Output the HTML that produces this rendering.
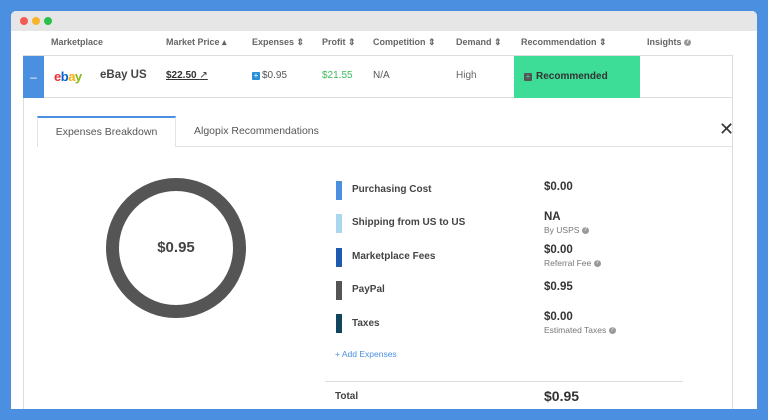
<!DOCTYPE html>
<html style="overflow:hidden;height:420px"><head><style>
body{margin:0;width:768px;height:420px;background:#4a8fe0;font-family:"Liberation Sans",sans-serif;position:relative;overflow:hidden}
.a{position:absolute}
.win{left:11px;top:11px;width:746px;height:398px;background:#fff;border-radius:5px 5px 0 0}
.tb{left:11px;top:11px;width:746px;height:20px;background:#e6e6e6;border-radius:5px 5px 0 0}
.dot{width:8px;height:8px;border-radius:50%;top:17px}
.h{top:37px;font-size:9px;color:#666;font-weight:bold}
.lbl{left:352px;font-size:10px;color:#444;font-weight:bold}
.bar{left:336px;width:6px;height:19px}
.val{left:544px;font-size:11.5px;color:#333;font-weight:bold}
.sub{left:544px;font-size:8.5px;color:#777}
.q{display:inline-block;width:7px;height:7px;border-radius:50%;background:#999;color:#fff;font-size:6px;line-height:7px;text-align:center;vertical-align:middle}
</style></head><body>
<div class="a win"></div>
<div class="a tb"></div>
<div class="a dot" style="left:20px;background:#f25c54"></div>
<div class="a dot" style="left:32px;background:#f7b52c"></div>
<div class="a dot" style="left:44px;background:#2bc04a"></div>
<div class="a h" style="left:51px">Marketplace</div>
<div class="a h" style="left:166px">Market Price ▴</div>
<div class="a h" style="left:252px">Expenses ⇕</div>
<div class="a h" style="left:322px">Profit ⇕</div>
<div class="a h" style="left:373px">Competition ⇕</div>
<div class="a h" style="left:456px">Demand ⇕</div>
<div class="a h" style="left:521px">Recommendation ⇕</div>
<div class="a h" style="left:647px">Insights <span class="q">?</span></div>
<div class="a" style="left:23px;top:55px;width:710px;height:43px;border:1px solid #ddd;box-sizing:border-box;background:#fff"></div>
<div class="a" style="left:23px;top:56px;width:21px;height:42px;background:#4a8fe0;color:#fff;font-size:12px;text-align:center;line-height:42px">–</div>
<div class="a" style="left:54px;top:69px;font-size:13px;font-weight:bold;letter-spacing:-0.5px"><span style="color:#e53238">e</span><span style="color:#0064d2">b</span><span style="color:#f5af02">a</span><span style="color:#86b817">y</span></div>
<div class="a" style="left:100px;top:69px;font-size:11.5px;font-weight:bold;color:#444">eBay US</div>
<div class="a" style="left:166px;top:70px;font-size:10px;font-weight:bold;color:#333;text-decoration:underline">$22.50 <span style="font-weight:normal;text-decoration:none">↗</span></div>
<div class="a" style="left:252px;top:72px;width:8px;height:8px;background:#2a8fd6;border-radius:1px;color:#fff;font-size:8px;line-height:8px;text-align:center">+</div>
<div class="a" style="left:262px;top:70px;font-size:10px;color:#555">$0.95</div>
<div class="a" style="left:322px;top:70px;font-size:10px;color:#3cba5c">$21.55</div>
<div class="a" style="left:373px;top:70px;font-size:10px;color:#555">N/A</div>
<div class="a" style="left:456px;top:70px;font-size:10px;color:#666">High</div>
<div class="a" style="left:514px;top:56px;width:126px;height:42px;background:#3ddc97"></div>
<div class="a" style="left:524px;top:73px;width:8px;height:8px;background:#555;border-radius:1px;color:#3ddc97;font-size:8px;line-height:8px;text-align:center">+</div>
<div class="a" style="left:536px;top:71px;font-size:10px;font-weight:bold;color:#333">Recommended</div>
<div class="a" style="left:23px;top:98px;width:710px;height:312px;border:1px solid #ddd;border-top:none;box-sizing:border-box"></div>
<div class="a" style="left:37px;top:146px;width:696px;height:1px;background:#e3e3e3"></div>
<div class="a" style="left:37px;top:116px;width:139px;height:31px;background:#fff;border:1px solid #e3e3e3;border-top:2px solid #4a8fe0;border-bottom:none;box-sizing:border-box;font-size:10.5px;color:#555;text-align:center;line-height:28px">Expenses Breakdown</div>
<div class="a" style="left:194px;top:125px;font-size:10.5px;color:#555">Algopix Recommendations</div>
<div class="a" style="left:719px;top:119px;font-size:18px;color:#333">✕</div>
<div class="a" style="left:106px;top:178px;width:140px;height:140px;border-radius:50%;border:13px solid #555;box-sizing:border-box"></div>
<div class="a" style="left:106px;top:239px;width:140px;text-align:center;font-size:15px;font-weight:bold;color:#444">$0.95</div>
<div class="a bar" style="top:181px;background:#4a8fe0"></div>
<div class="a bar" style="top:214px;background:#a9d8ee"></div>
<div class="a bar" style="top:248px;background:#1e5bb0"></div>
<div class="a bar" style="top:281px;background:#555"></div>
<div class="a bar" style="top:314px;background:#11445f"></div>
<div class="a lbl" style="top:184px">Purchasing Cost</div>
<div class="a lbl" style="top:217px">Shipping from US to US</div>
<div class="a lbl" style="top:251px">Marketplace Fees</div>
<div class="a lbl" style="top:284px">PayPal</div>
<div class="a lbl" style="top:318px">Taxes</div>
<div class="a val" style="top:181px">$0.00</div>
<div class="a val" style="top:211px">NA</div>
<div class="a sub" style="top:225px">By USPS <span class="q">?</span></div>
<div class="a val" style="top:244px">$0.00</div>
<div class="a sub" style="top:258px">Referral Fee <span class="q">?</span></div>
<div class="a val" style="top:281px">$0.95</div>
<div class="a val" style="top:311px">$0.00</div>
<div class="a sub" style="top:325px">Estimated Taxes <span class="q">?</span></div>
<div class="a" style="left:335px;top:349px;font-size:8.5px;color:#4a8fe0">+ Add Expenses</div>
<div class="a" style="left:325px;top:381px;width:358px;height:1px;background:#ddd"></div>
<div class="a" style="left:335px;top:391px;font-size:10px;font-weight:bold;color:#444">Total</div>
<div class="a" style="left:544px;top:388px;font-size:14px;font-weight:bold;color:#333">$0.95</div>
<div class="a" style="left:0;top:409px;width:768px;height:11px;background:#4a8fe0"></div>
</body></html>
